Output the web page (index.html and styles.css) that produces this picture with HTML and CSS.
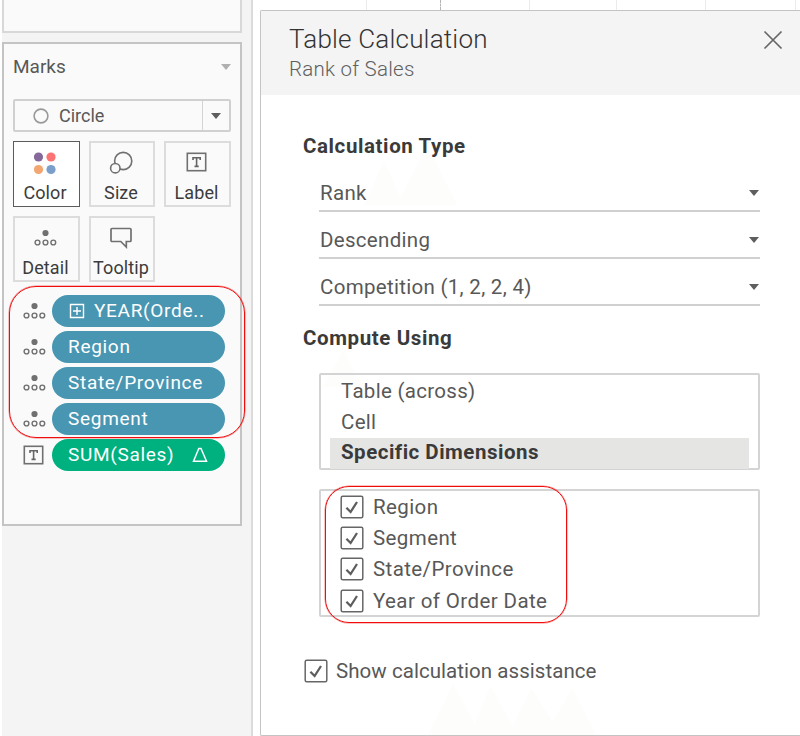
FILE: index.html
```
<!DOCTYPE html>
<html lang="en">
<head>
    <meta charset="UTF-8">
    <meta name="viewport" content="width=device-width, initial-scale=1.0">
    <title>Table Calculation - Rank of Sales</title>
    <link rel="stylesheet" href="styles.css">
</head>
<body>
    <!-- shared icons -->
    <svg class="defs" width="0" height="0">
        <symbol id="detail" viewBox="0 0 24 18">
            <circle cx="11.5" cy="4" r="3.1" fill="#707070"/>
            <g fill="none" stroke="#707070" stroke-width="1.4">
                <circle cx="3.5" cy="13.5" r="2.4"/>
                <circle cx="11.5" cy="13.5" r="2.4"/>
                <circle cx="19.3" cy="13.5" r="2.4"/>
            </g>
        </symbol>
        <symbol id="label" viewBox="0 0 22 20">
            <rect x="1.3" y="1.3" width="18.4" height="17.4" fill="none" stroke="#707070" stroke-width="1.6"/>
            <path d="M7 8V5.8h7.2V8M10.6 5.8v8.6M8.5 14.4h4.2" fill="none" stroke="#666" stroke-width="1.6"/>
        </symbol>
        <symbol id="check" viewBox="0 0 24 24">
            <rect x="1.2" y="1.2" width="21.6" height="21.6" rx="1.5" fill="#fff" stroke="#666" stroke-width="1.5"/>
            <path d="M6.4 12.8l4.2 4.2 6.4-10" fill="none" stroke="#5e5e5e" stroke-width="2.3"/>
        </symbol>
    </svg>

    <aside class="sidebar">
        <div class="shelf"></div>
        <section class="marks">
            <div class="marks-header">Marks <span class="arrow light"></span></div>
            <div class="mark-type">
                <svg width="16" height="16"><circle cx="8" cy="8" r="6.9" fill="none" stroke="#999" stroke-width="1.6"/></svg>
                <span class="mark-name">Circle</span>
                <span class="mark-arrow"><span class="arrow"></span></span>
            </div>
            <div class="cards">
                <div class="card active">
                    <svg width="24" height="24">
                        <circle cx="5.5" cy="6" r="4.6" fill="#86699b"/>
                        <circle cx="18" cy="6" r="4.6" fill="#fb7373"/>
                        <circle cx="5.5" cy="18.5" r="4.6" fill="#f3a672"/>
                        <circle cx="18" cy="18.5" r="4.6" fill="#7b9fca"/>
                    </svg>
                    Color
                </div>
                <div class="card">
                    <svg width="24" height="24" fill="#fafafa" stroke="#707070" stroke-width="1.6">
                        <circle cx="14.2" cy="10" r="8.6"/>
                        <circle cx="6.3" cy="17.2" r="4.7"/>
                    </svg>
                    Size
                </div>
                <div class="card">
                    <svg class="mid" width="22" height="20"><use href="#label"/></svg>
                    Label
                </div>
                <div class="card">
                    <svg class="low" width="24" height="18"><use href="#detail"/></svg>
                    Detail
                </div>
                <div class="card">
                    <svg class="mid" width="24" height="22"><path d="M3 1.5h18q1 0 1 1v11q0 1-1 1h-3.7v5.5l-5.5-5.5H3q-1 0-1-1v-11q0-1 1-1z" fill="none" stroke="#707070" stroke-width="1.7"/></svg>
                    Tooltip
                </div>
            </div>
            <div class="pills">
                <div class="pill-row">
                    <svg width="24" height="18"><use href="#detail"/></svg>
                    <div class="pill">
                        <svg class="plus" width="16" height="16"><path d="M1.5 1.5h13v13h-13zM4 8h8M8 4v8" fill="none" stroke="#fff" stroke-width="1.4"/></svg>
                        YEAR(Orde..
                    </div>
                </div>
                <div class="pill-row">
                    <svg width="24" height="18"><use href="#detail"/></svg>
                    <div class="pill">Region</div>
                </div>
                <div class="pill-row">
                    <svg width="24" height="18"><use href="#detail"/></svg>
                    <div class="pill">State/Province</div>
                </div>
                <div class="pill-row">
                    <svg width="24" height="18"><use href="#detail"/></svg>
                    <div class="pill">Segment</div>
                </div>
                <div class="pill-row">
                    <svg width="22" height="20"><use href="#label"/></svg>
                    <div class="pill measure">
                        SUM(Sales)
                        <svg width="16" height="16"><path d="M6.8 1.5h2.2L14.5 14.3h-13z" fill="none" stroke="#fff" stroke-width="1.5"/></svg>
                    </div>
                </div>
                <div class="highlight highlight-pills"></div>
            </div>
        </section>
    </aside>

    <main class="workspace">
        <div class="grid-top">
            <span></span><span class="dashed"></span><span></span><span></span><span></span><span></span>
        </div>
        <section class="dialog">
            <svg class="watermark" width="500" height="640" fill="#fdfdfc">
                <path d="M103 110l20-44 20 44zM136 110l30-60 30 60zM62 292l20-36 20 36zM156 662l36-73 22 40 15-38 23 40 18-38 22 34 19-34 36 71z"/>
            </svg>
            <header class="dialog-header">
                <div>
                    <h1>Table Calculation</h1>
                    <p>Rank of Sales</p>
                </div>
                <svg width="20" height="20"><path d="M1.5 1.5l17 17M18.5 1.5l-17 17" stroke="#666" stroke-width="1.7"/></svg>
            </header>
            <div class="dialog-body">
                <h2>Calculation Type</h2>
                <div class="selects">
                    <div class="select">Rank <span class="arrow"></span></div>
                    <div class="select">Descending <span class="arrow"></span></div>
                    <div class="select">Competition (1, 2, 2, 4) <span class="arrow"></span></div>
                </div>
                <h2 class="compute">Compute Using</h2>
                <div class="box scope">
                    <div class="option">Table (across)</div>
                    <div class="option">Cell</div>
                    <div class="option selected">Specific Dimensions</div>
                </div>
                <div class="box dimensions">
                    <div class="check"><svg width="24" height="24"><use href="#check"/></svg>Region</div>
                    <div class="check"><svg width="24" height="24"><use href="#check"/></svg>Segment</div>
                    <div class="check"><svg width="24" height="24"><use href="#check"/></svg>State/Province</div>
                    <div class="check"><svg width="24" height="24"><use href="#check"/></svg>Year of Order Date</div>
                    <div class="highlight highlight-dims"></div>
                </div>
                <div class="check assistance"><svg width="24" height="24"><use href="#check"/></svg>Show calculation assistance</div>
            </div>
        </section>
    </main>
</body>
</html>
```
FILE: styles.css
```
* {
    box-sizing: border-box;
}
body {
    margin: 0;
    display: flex;
    width: 800px;
    height: 736px;
    overflow: hidden;
    background: #fff;
    color: #585858;
    font-family: Roboto, "Liberation Sans", sans-serif;
    font-size: 20.5px;
    font-weight: 400;
    letter-spacing: 0.3px;
}
h1, h2, p {
    margin: 0;
}
svg {
    flex: none;
    display: block;
}
.defs {
    position: absolute;
}
.arrow {
    border: 5.5px solid transparent;
    border-top: 6px solid #5e5e5e;
    border-bottom: 0;
}
.arrow.light {
    border-top-color: #b0b0b0;
}

/* left side */
.sidebar {
    width: 251px;
    margin-left: 2px;
    background: #f4f4f4;
    border-right: 2px solid #dcdcdc;
    flex: none;
}
.shelf {
    width: 240px;
    height: 33px;
    background: #fafafa;
    border: 2px solid #d8d8d8;
    border-top: 0;
}
.marks {
    width: 240px;
    height: 484px;
    margin-top: 9px;
    padding: 0 9px;
    background: #fafafa;
    border: 2px solid #c4c4c4;
}
.marks-header {
    display: flex;
    align-items: center;
    justify-content: space-between;
    height: 45px;
    font-size: 19px;
    letter-spacing: 0;
}
.mark-type {
    display: flex;
    align-items: center;
    width: 218px;
    height: 33px;
    margin-top: 10px;
    padding-left: 18px;
    border: 2px solid #d0d0d0;
    border-radius: 2px;
    font-size: 18px;
}
.mark-name {
    flex: 1;
    padding-left: 10px;
    letter-spacing: 0;
}
.mark-arrow {
    display: flex;
    align-items: center;
    justify-content: center;
    width: 27px;
    height: 100%;
    border-left: 1px solid #d4d4d4;
}
.cards {
    display: grid;
    grid-template-columns: 67px 66px 67px;
    grid-auto-rows: 66px;
    gap: 9px;
    margin-top: 9px;
}
.card {
    display: flex;
    flex-direction: column;
    align-items: center;
    justify-content: space-between;
    padding: 8px 2px 2px 0;
    border: 2px solid #dcdcdc;
    color: #3c3c3c;
    font-size: 18px;
    line-height: 21px;
    letter-spacing: 0.1px;
    white-space: nowrap;
}
.card.active {
    padding: 9px 4px 3px 1px;
    background: #fff;
    border: 1px solid #5c5c5c;
}
.mid {
    margin-top: 1px;
}
.low {
    margin-top: 3px;
}
.pills {
    position: relative;
    display: flex;
    flex-direction: column;
    gap: 4px;
    margin-top: 13px;
}
.pill-row {
    display: flex;
    align-items: center;
    justify-content: space-between;
    height: 32px;
    padding: 0 6px 0 10px;
}
.pill {
    display: flex;
    align-items: center;
    width: 173px;
    height: 32px;
    padding: 0 17px 1px 16px;
    border-radius: 16px;
    background: #4996b2;
    color: #fff;
    font-size: 19px;
    letter-spacing: 0.7px;
    white-space: nowrap;
}
.pill.measure {
    background: #00b180;
    justify-content: space-between;
}
.plus {
    margin-left: 1px;
    margin-right: 9px;
}
.highlight {
    position: absolute;
    border: 1.5px solid #f00c0c;
    box-shadow: 0 0 0 0.5px rgba(240, 12, 12, 0.5);
}
.highlight-pills {
    left: -4px;
    top: -9px;
    width: 236px;
    height: 152px;
    border-radius: 27px;
}

/* right side */
.workspace {
    flex: 1;
    padding-left: 7px;
}
.grid-top {
    display: grid;
    grid-template-columns: 74px 89px 87px 89px 90px 5px;
    height: 10px;
    padding-left: 106px;
}
.grid-top span {
    border-left: 1px solid #ebebeb;
}
.grid-top .dashed {
    border-left: 1px dashed #b4b4b4;
}
.dialog {
    position: relative;
    height: 726px;
    border: 1px solid #c4c4c4;
    border-right: 0;
    border-radius: 2px 0 0 2px;
    overflow: hidden;
}
.watermark {
    position: absolute;
    left: 0;
    top: 84px;
    z-index: -1;
}
.dialog-header {
    display: flex;
    justify-content: space-between;
    height: 84px;
    padding: 13px 18px 0 28px;
    background: #f4f4f4;
}
.dialog-header svg {
    margin-top: 6px;
}
.dialog-header h1 {
    color: #333;
    font-size: 26px;
    font-weight: 300;
    line-height: 31px;
    letter-spacing: 0.2px;
}
.dialog-header p {
    color: #606060;
    font-size: 20.5px;
    font-weight: 300;
    line-height: 28px;
    letter-spacing: 0.25px;
}
.dialog-body {
    padding: 37px 41px 0 42px;
}
h2 {
    color: #3a3a3a;
    font-size: 20.5px;
    font-weight: 700;
    line-height: 28px;
    letter-spacing: 0.6px;
}
.selects {
    width: 457px;
    padding-left: 16px;
    margin-top: 5px;
}
.select {
    display: flex;
    align-items: center;
    justify-content: space-between;
    height: 47px;
    padding: 11px 1px 0 1px;
    border-bottom: 2px solid #d0d0d0;
}
.compute {
    margin-top: 18px;
}
.box {
    width: 441px;
    margin-left: 16px;
    border: 2px solid #d4d4d4;
    border-radius: 2px;
}
.scope {
    height: 97px;
    margin-top: 21px;
    padding: 1px 9px 0;
}
.option {
    height: 31px;
    padding-left: 11px;
    line-height: 30px;
}
.selected {
    background: #e5e5e4;
    color: #3a3a3a;
    font-weight: 700;
    line-height: 29px;
    letter-spacing: 0.5px;
}
.dimensions {
    position: relative;
    height: 128px;
    margin-top: 19px;
    padding: 0 0 0 19px;
}
.check {
    display: flex;
    align-items: center;
    gap: 9px;
    height: 31.3px;
    letter-spacing: 0.4px;
}
.assistance {
    margin: 38px 0 0 1px;
    gap: 8px;
    letter-spacing: 0.05px;
}
.highlight-dims {
    left: 4px;
    top: -5px;
    width: 242px;
    height: 137px;
    border-radius: 24px;
}
```
